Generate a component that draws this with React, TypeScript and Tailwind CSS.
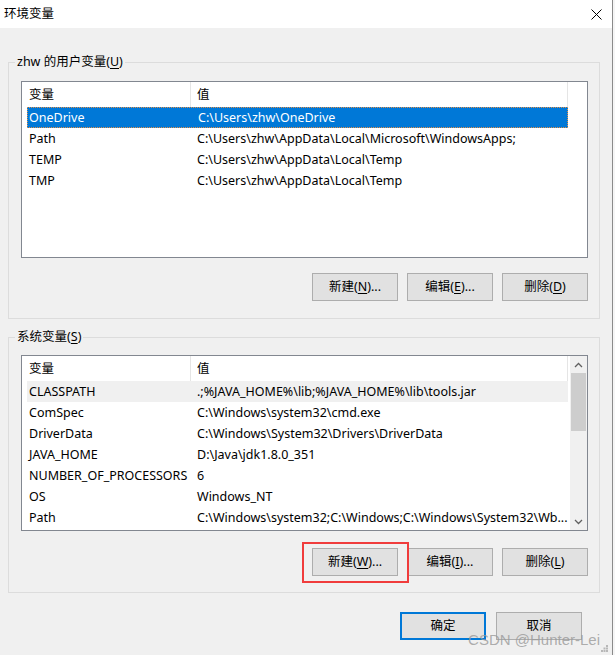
import React from "react";

type Row = { name: string; value: string };

const userVars: Row[] = [
  { name: "OneDrive", value: "C:\\Users\\zhw\\OneDrive" },
  { name: "Path", value: "C:\\Users\\zhw\\AppData\\Local\\Microsoft\\WindowsApps;" },
  { name: "TEMP", value: "C:\\Users\\zhw\\AppData\\Local\\Temp" },
  { name: "TMP", value: "C:\\Users\\zhw\\AppData\\Local\\Temp" },
];

const systemVars: Row[] = [
  { name: "CLASSPATH", value: ".;%JAVA_HOME%\\lib;%JAVA_HOME%\\lib\\tools.jar" },
  { name: "ComSpec", value: "C:\\Windows\\system32\\cmd.exe" },
  { name: "DriverData", value: "C:\\Windows\\System32\\Drivers\\DriverData" },
  { name: "JAVA_HOME", value: "D:\\Java\\jdk1.8.0_351" },
  { name: "NUMBER_OF_PROCESSORS", value: "6" },
  { name: "OS", value: "Windows_NT" },
  { name: "Path", value: "C:\\Windows\\system32;C:\\Windows;C:\\Windows\\System32\\Wb..." },
];

const Btn: React.FC<{ label: string; keyChar?: string; suffix?: string; primary?: boolean }> = ({
  label,
  keyChar,
  suffix = "",
  primary,
}) => (
  <button
    className={
      "h-[28px] w-[86px] bg-[#e1e1e1] text-[12.5px] text-black flex items-center justify-center " +
      (primary ? "border-2 border-[#0078d7]" : "border border-[#adadad]")
    }
  >
    {label}
    {keyChar && (
      <>
        (<span className="underline underline-offset-2">{keyChar}</span>)
      </>
    )}
    {suffix}
  </button>
);

const VarList: React.FC<{ rows: Row[]; selected?: number; hovered?: number; scroll?: boolean; height: string }> = ({
  rows,
  selected,
  hovered,
  scroll,
  height,
}) => (
  <div className={"relative bg-white border border-[#828790] overflow-hidden flex " + height}>
    <div className="flex flex-col flex-1">
      <div className="ml-[5px] w-[541px] h-[25px] flex shrink-0">
        <div className="w-[164px] pl-[2px] flex items-center border-r border-[#e5e5e5]">变量</div>
        <div className="flex-1 pl-[6px] flex items-center border-r border-[#e5e5e5]">值</div>
      </div>
      {rows.map((r, i) => (
        <div
          key={r.name + i}
          className={
            "ml-[5px] w-[541px] h-[21px] flex shrink-0 items-center whitespace-nowrap " +
            (i === selected
              ? "bg-[#0078d7] text-white border border-dotted border-[#e0904a]"
              : i === hovered
              ? "bg-[#f0f0f0]"
              : "")
          }
        >
          <div className={"w-[164px] " + (i === selected ? "pl-[1px]" : "pl-[2px]")}>{r.name}</div>
          <div className="flex-1 pl-[6px] overflow-hidden">{r.value}</div>
        </div>
      ))}
    </div>
    {scroll && (
      <div className="w-[17px] bg-[#f0f0f0] flex flex-col shrink-0">
        <div className="h-[17px] flex items-center justify-center">
          <svg width="9" height="6" viewBox="0 0 9 6">
            <path d="M1 5 L4.5 1.5 L8 5" fill="none" stroke="#606060" strokeWidth="1.3" />
          </svg>
        </div>
        <div className="mx-[1px] h-[58px] bg-[#cdcdcd]" />
        <div className="flex-1" />
        <div className="h-[17px] flex items-center justify-center">
          <svg width="9" height="6" viewBox="0 0 9 6">
            <path d="M1 1 L4.5 4.5 L8 1" fill="none" stroke="#606060" strokeWidth="1.3" />
          </svg>
        </div>
      </div>
    )}
  </div>
);

export default function App() {
  return (
    <div className="w-[615px] h-[655px] flex bg-[#f5f5f5] text-[12.5px] text-black font-['Noto_Sans','Noto_Sans_CJK_SC',sans-serif] leading-[16px]">
      <div className="relative w-[613px] h-full flex flex-col bg-[#f0f0f0] border-r border-[#8a8a8a]">
        {/* Title bar */}
        <div className="h-[28px] bg-white flex items-center justify-between pl-[4px] pr-[10px] shrink-0">
          <span>环境变量</span>
          <svg width="11" height="11" viewBox="0 0 11 11">
            <path d="M0.5 0.5 L10.5 10.5 M10.5 0.5 L0.5 10.5" stroke="#000" strokeWidth="1" />
          </svg>
        </div>

        {/* User variables */}
        <fieldset className="mt-[26px] ml-[8px] w-[592px] border border-[#dcdcdc] px-0 pb-[17px]">
          <legend className="ml-[6px] px-[2px]">
            zhw 的用户变量(<span className="underline underline-offset-2">U</span>)
          </legend>
          <div className="pl-[12px] pr-[11px] pt-[11px]">
            <VarList rows={userVars} selected={0} height="h-[177px]" />
            <div className="mt-[15px] flex justify-end gap-[9px]">
              <Btn label="新建" keyChar="N" suffix="..." />
              <Btn label="编辑" keyChar="E" suffix="..." />
              <Btn label="删除" keyChar="D" />
            </div>
          </div>
        </fieldset>

        {/* System variables */}
        <fieldset className="mt-[10px] ml-[8px] w-[592px] border border-[#dcdcdc] px-0 pb-[16px]">
          <legend className="ml-[6px] px-[2px]">
            系统变量(<span className="underline underline-offset-2">S</span>)
          </legend>
          <div className="pl-[12px] pr-[11px] pt-[10px]">
            <VarList rows={systemVars} hovered={0} scroll height="h-[176px]" />
            <div className="mt-[17px] flex justify-end gap-[9px]">
              <div className="relative">
                <Btn label="新建" keyChar="W" suffix="..." />
                <span className="absolute -left-[10px] -right-[11px] -top-[6px] -bottom-[7px] border-2 border-[#f03c3c] pointer-events-none" />
              </div>
              <Btn label="编辑" keyChar="I" suffix="..." />
              <Btn label="删除" keyChar="L" />
            </div>
          </div>
        </fieldset>

        {/* Dialog buttons */}
        <div className="mt-[19px] pr-[30px] flex justify-end gap-[10px]">
          <Btn label="确定" primary />
          <Btn label="取消" />
        </div>

        <span className="absolute right-[12px] bottom-[6px] text-[15px] leading-[18px] text-[#9a9a9a]/80 font-['Liberation_Sans',sans-serif] pointer-events-none">
          CSDN @Hunter-Lei
        </span>
        <svg className="absolute right-[4px] bottom-[3px]" width="7" height="7" viewBox="0 0 7 7">
          <rect x="5" y="0" width="2" height="2" fill="#b8b8b8" />
          <rect x="2.5" y="2.5" width="2" height="2" fill="#b8b8b8" />
          <rect x="5" y="2.5" width="2" height="2" fill="#b8b8b8" />
          <rect x="0" y="5" width="2" height="2" fill="#b8b8b8" />
          <rect x="2.5" y="5" width="2" height="2" fill="#b8b8b8" />
          <rect x="5" y="5" width="2" height="2" fill="#b8b8b8" />
        </svg>
      </div>
    </div>
  );
}
